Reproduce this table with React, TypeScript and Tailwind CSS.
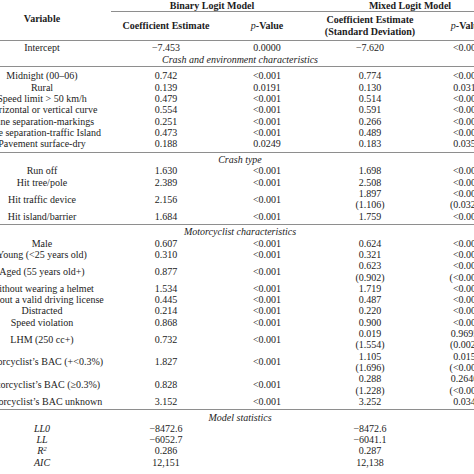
import React from "react";

type Val = string | [string, string];

interface Row {
  label: string;
  bc: string;
  bp: string;
  mc: Val;
  mp: Val;
}

const LINE = "border-b-[1.5px] border-[#8e8e8e]";

const envRows: Row[] = [
  { label: "Midnight (00–06)", bc: "0.742", bp: "<0.001", mc: "0.774", mp: "<0.001" },
  { label: "Rural", bc: "0.139", bp: "0.0191", mc: "0.130", mp: "0.0312" },
  { label: "Speed limit > 50 km/h", bc: "0.479", bp: "<0.001", mc: "0.514", mp: "<0.001" },
  { label: "Horizontal or vertical curve", bc: "0.554", bp: "<0.001", mc: "0.591", mp: "<0.001" },
  { label: "Lane separation-markings", bc: "0.251", bp: "<0.001", mc: "0.266", mp: "<0.001" },
  { label: "Lane separation-traffic Island", bc: "0.473", bp: "<0.001", mc: "0.489", mp: "<0.001" },
  { label: "Pavement surface-dry", bc: "0.188", bp: "0.0249", mc: "0.183", mp: "0.0356" },
];

const crashRows: Row[] = [
  { label: "Run off", bc: "1.630", bp: "<0.001", mc: "1.698", mp: "<0.001" },
  { label: "Hit tree/pole", bc: "2.389", bp: "<0.001", mc: "2.508", mp: "<0.001" },
  { label: "Hit traffic device", bc: "2.156", bp: "<0.001", mc: ["1.897", "(1.106)"], mp: ["<0.001", "(0.0321)"] },
  { label: "Hit island/barrier", bc: "1.684", bp: "<0.001", mc: "1.759", mp: "<0.001" },
];

const riderRows: Row[] = [
  { label: "Male", bc: "0.607", bp: "<0.001", mc: "0.624", mp: "<0.001" },
  { label: "Young (<25 years old)", bc: "0.310", bp: "<0.001", mc: "0.321", mp: "<0.001" },
  { label: "Aged (55 years old+)", bc: "0.877", bp: "<0.001", mc: ["0.623", "(0.902)"], mp: ["<0.001", "(<0.001)"] },
  { label: "Without wearing a helmet", bc: "1.534", bp: "<0.001", mc: "1.719", mp: "<0.001" },
  { label: "Without a valid driving license", bc: "0.445", bp: "<0.001", mc: "0.487", mp: "<0.001" },
  { label: "Distracted", bc: "0.214", bp: "<0.001", mc: "0.220", mp: "<0.001" },
  { label: "Speed violation", bc: "0.868", bp: "<0.001", mc: "0.900", mp: "<0.001" },
  { label: "LHM (250 cc+)", bc: "0.732", bp: "<0.001", mc: ["0.019", "(1.554)"], mp: ["0.96950", "(0.0021)"] },
  { label: "Motorcyclist’s BAC (+<0.3%)", bc: "1.827", bp: "<0.001", mc: ["1.105", "(1.696)"], mp: ["0.0153", "(<0.001)"] },
  { label: "Motorcyclist’s BAC (≥0.3%)", bc: "0.828", bp: "<0.001", mc: ["0.288", "(1.228)"], mp: ["0.26400", "(<0.001)"] },
  { label: "Motorcyclist’s BAC unknown", bc: "3.152", bp: "<0.001", mc: "3.252", mp: "0.0342" },
];

const stats = [
  { label: "LL0", b: "−8472.6", m: "−8472.6" },
  { label: "LL", b: "−6052.7", m: "−6041.1" },
  { label: "R2", b: "0.286", m: "0.287" },
  { label: "AIC", b: "12,151", m: "12,138" },
];

function Cell({ v, cls = "" }: { v: Val; cls?: string }) {
  return (
    <td className={`p-0 text-center align-middle whitespace-nowrap ${cls}`}>
      {Array.isArray(v) ? (
        <>
          <div>{v[0]}</div>
          <div>{v[1]}</div>
        </>
      ) : (
        v
      )}
    </td>
  );
}

function DataRow({ r, cls = "" }: { r: Row; cls?: string }) {
  return (
    <tr>
      <Cell v={r.label} cls={cls} />
      <Cell v={r.bc} cls={cls} />
      <Cell v={r.bp} cls={cls} />
      <Cell v={r.mc} cls={cls} />
      <Cell v={r.mp} cls={cls} />
    </tr>
  );
}

function Section({ rows, first = "" }: { rows: Row[]; first?: string }) {
  return (
    <>
      {rows.map((r, i) => {
        let cls = "";
        if (i === 0) cls += ` ${first}`;
        if (i === rows.length - 1) cls += ` pb-[2px] ${LINE}`;
        return <DataRow key={r.label} r={r} cls={cls} />;
      })}
    </>
  );
}

function Caption({ text, cls = "" }: { text: string; cls?: string }) {
  return (
    <tr>
      <td colSpan={5} className={`p-0 text-center italic ${cls}`}>
        {text}
      </td>
    </tr>
  );
}

function PValue() {
  return (
    <>
      <span className="italic font-normal">p</span>-Value
    </>
  );
}

export default function App() {
  return (
    <div className="w-[474px] h-[474px] overflow-hidden bg-white">
      <table className="ml-[-27px] w-[534px] table-fixed border-collapse font-['Liberation_Serif',serif] text-[10px] leading-[11.3px] text-[#1c1c1c]">
        <colgroup>
          <col className="w-[138px]" />
          <col className="w-[110px]" />
          <col className="w-[92px]" />
          <col className="w-[114px]" />
          <col className="w-[80px]" />
        </colgroup>
        <thead>
          <tr>
            <th rowSpan={2} className={`p-0 pb-[3px] text-center align-middle font-bold ${LINE}`}>
              Variable
            </th>
            <th colSpan={2} className="p-0 text-center font-bold border-b border-[#8e8e8e]">
              Binary Logit Model
            </th>
            <th colSpan={2} className="p-0 text-center font-bold border-b border-[#8e8e8e]">
              Mixed Logit Model
            </th>
          </tr>
          <tr>
            <th className={`p-0 pt-[2px] pb-[3px] text-center align-middle font-bold ${LINE}`}>
              Coefficient Estimate
            </th>
            <th className={`p-0 pt-[2px] pb-[3px] text-center align-middle font-bold ${LINE}`}>
              <PValue />
            </th>
            <th className={`p-0 pt-[2px] pb-[3px] text-center align-middle font-bold ${LINE}`}>
              <div>Coefficient Estimate</div>
              <div>(Standard Deviation)</div>
            </th>
            <th className={`p-0 pt-[2px] pb-[3px] text-center align-middle font-bold ${LINE}`}>
              <PValue />
            </th>
          </tr>
        </thead>
        <tbody>
          <DataRow
            r={{ label: "Intercept", bc: "−7.453", bp: "0.0000", mc: "−7.620", mp: "<0.001" }}
            cls="pt-[1.5px]"
          />
          <Caption text="Crash and environment characteristics" cls={`pb-[1px] ${LINE}`} />
          <Section rows={envRows} first="pt-[3.5px]" />
          <Caption text="Crash type" cls="pt-[1.5px]" />
          <Section rows={crashRows} />
          <Caption text="Motorcyclist characteristics" cls="pt-[1.5px]" />
          <Section rows={riderRows} />
          <Caption text="Model statistics" cls="pt-[1.5px]" />
          {stats.map((s) => (
            <tr key={s.label}>
              <td className="p-0 text-center italic">
                {s.label === "R2" ? (
                  <>
                    R<sup className="text-[7px]">2</sup>
                  </>
                ) : (
                  s.label
                )}
              </td>
              <td className="p-0 text-center">{s.b}</td>
              <td className="p-0" />
              <td className="p-0 text-center">{s.m}</td>
              <td className="p-0" />
            </tr>
          ))}
        </tbody>
      </table>
    </div>
  );
}
